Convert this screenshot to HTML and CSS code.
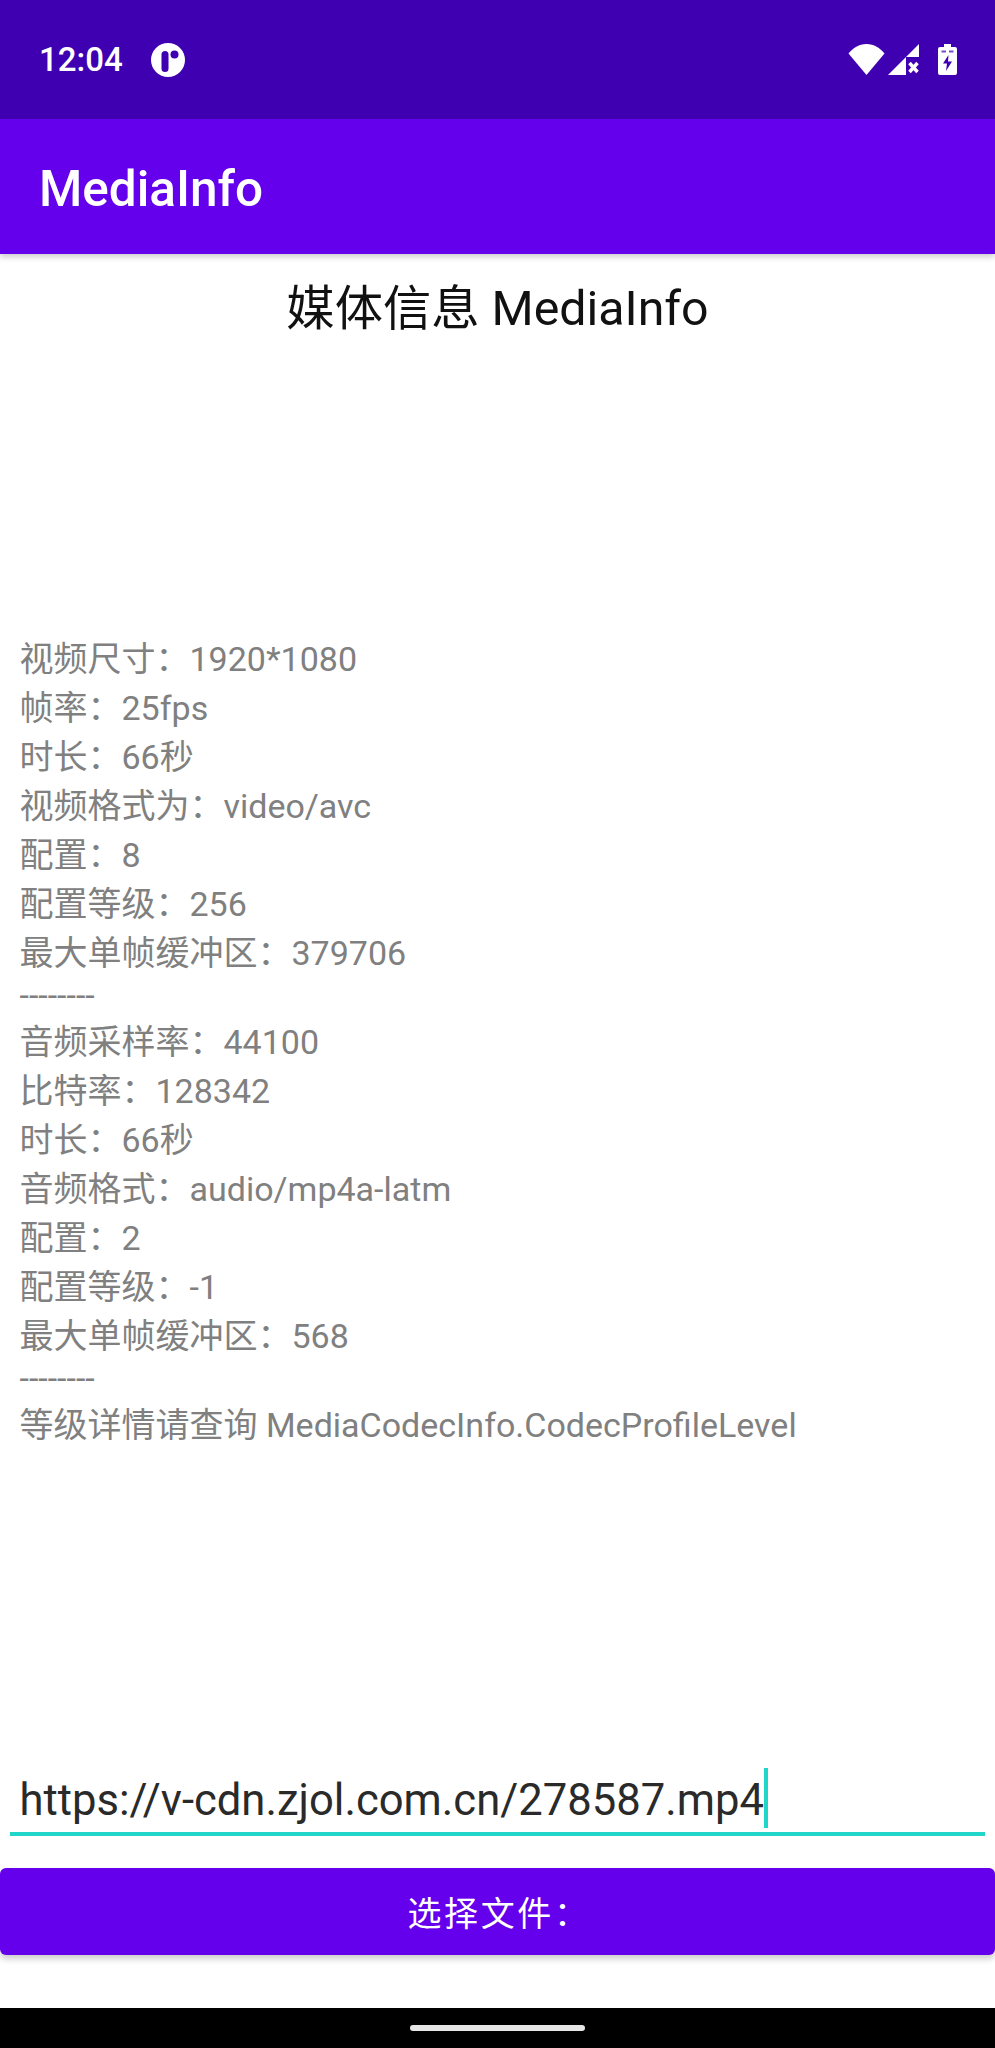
FILE: index.html
```html
<!DOCTYPE html>
<html lang="zh">
<head>
<meta charset="utf-8">
<title>MediaInfo</title>
<link rel="stylesheet" href="styles.css">
</head>
<body>
<div class="screen">
  <div class="statusbar">
    <div class="status-left">
      <span class="clock">12:04</span>
      <svg class="logo" viewBox="0 0 34 34"><circle cx="17" cy="17" r="17" fill="#fff"/><rect x="10.5" y="8" width="7" height="21" rx="3.5" fill="#3f00b1"/><circle cx="23.5" cy="11.5" r="4" fill="#3f00b1"/></svg>
    </div>
    <div class="status-right">
      <svg class="ic-wifi" viewBox="0 0 37 31"><path d="M18.5 31 L0.5 9.5 C5 4 11 0 18.5 0 C26 0 32 4 36.5 9.5 Z" fill="#fff"/></svg>
      <svg class="ic-signal" viewBox="0 0 32 31"><path d="M31 0 V13 H18 V31 H0 Z" fill="#fff"/><path d="M21.5 19 L29.5 28 M29.5 19 L21.5 28" stroke="#fff" stroke-width="3.4" fill="none"/></svg>
      <svg class="ic-battery" viewBox="0 0 19 31"><path d="M6 0 H13 V3 H17 Q19 3 19 5 V29 Q19 31 17 31 H2 Q0 31 0 29 V5 Q0 3 2 3 H6 Z" fill="#fff"/><path d="M10.5 11 L5 19.5 H9 L8 27 L14 17.5 H10 Z" fill="#3f00b1"/><path d="M3.5 6.5 H8 V8.5 H3.5 Z M11 6.5 H15.5 V8.5 H11 Z" fill="#3f00b1" opacity=".7"/></svg>
    </div>
  </div>
  <header class="appbar">MediaInfo</header>
  <main class="content">
    <h1 class="title">媒体信息 MediaInfo</h1>
    <div class="info">
      <div>视频尺寸：1920*1080</div>
      <div>帧率：25fps</div>
      <div>时长：66秒</div>
      <div>视频格式为：video/avc</div>
      <div>配置：8</div>
      <div>配置等级：256</div>
      <div>最大单帧缓冲区：379706</div>
      <div>--------</div>
      <div>音频采样率：44100</div>
      <div>比特率：128342</div>
      <div>时长：66秒</div>
      <div>音频格式：audio/mp4a-latm</div>
      <div>配置：2</div>
      <div>配置等级：-1</div>
      <div>最大单帧缓冲区：568</div>
      <div>--------</div>
      <div>等级详情请查询 MediaCodecInfo.CodecProfileLevel</div>
    </div>
    <div class="field"><span class="field-text">https://v-cdn.zjol.com.cn/278587.mp4</span><span class="caret"></span></div>
    <div class="btn">选择文件：</div>
  </main>
  <div class="navbar"><span class="pill"></span></div>
</div>
</body>
</html>
```

FILE: styles.css
```css
* { box-sizing: border-box; }
html, body { margin: 0; padding: 0; background: #fff; }
body { font-family: Roboto, "Noto Sans CJK SC", sans-serif; }
.screen { width: 995px; height: 2048px; display: flex; flex-direction: column; overflow: hidden; }
.statusbar { height: 119px; flex: none; background: #3f00b1; color: #fff; display: flex; justify-content: space-between; align-items: center; padding: 0 38px 0 39px; }
.status-left { display: flex; align-items: center; gap: 28px; }
.clock { font-size: 33px; font-weight: 500; }
.logo { width: 34px; height: 34px; display: block; }
.status-right { display: flex; align-items: center; gap: 3px; }
.ic-wifi { width: 37px; height: 31px; display: block; }
.ic-signal { width: 32px; height: 31px; display: block; }
.ic-battery { width: 19px; height: 31px; display: block; margin-left: 15px; }
.appbar { height: 135px; flex: none; background: #6400ec; color: #fff; font-size: 49.5px; font-weight: 500; display: flex; align-items: center; padding: 4px 0 0 39px; box-shadow: 0 3px 6px rgba(0,0,0,.2); position: relative; }
.content { flex: 1; display: flex; flex-direction: column; }
.title { margin: 15px 0 0; font-size: 48.3px; font-weight: 400; color: #111; text-align: center; }
.info { margin-top: 293px; padding-left: 19.5px; font-size: 34px; color: #808080; }
.field { margin: auto 10px 0; height: 76px; display: flex; align-items: flex-end; padding: 0 0 4px 9.5px; border-bottom: 4px solid #1fd6c8; font-size: 43.6px; color: #2a2a2a; }
.field-text { line-height: 54px; }
.caret { width: 4px; height: 60px; background: #1fd6c8; }
.btn { margin: 32px 0 53px; height: 87px; background: #6400ec; color: #fff; border-radius: 6px; font-size: 34px; letter-spacing: 2.6px; display: flex; align-items: center; justify-content: center; padding-left: 3px; box-shadow: 0 4px 6px rgba(0,0,0,.2); }
.navbar { height: 40px; flex: none; background: #000; display: flex; justify-content: center; align-items: center; }
.pill { width: 175px; height: 6px; border-radius: 3px; background: #e6e6e6; }
```
